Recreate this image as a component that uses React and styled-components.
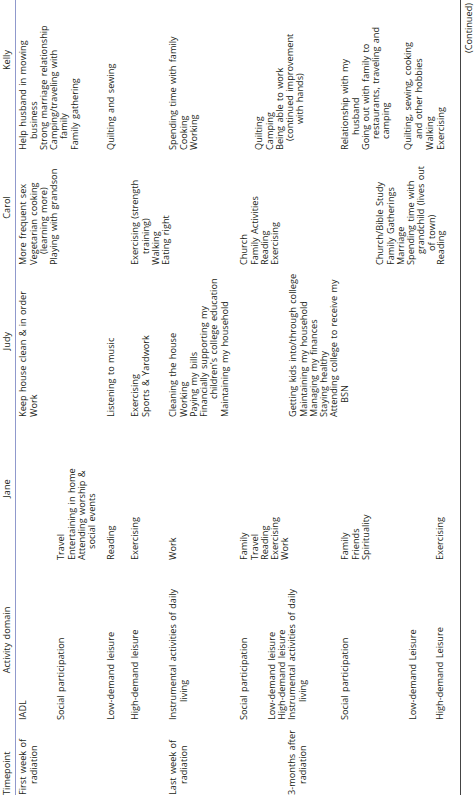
import React from 'react';
import styled, { createGlobalStyle } from 'styled-components';

// Table is set on a landscape sheet, then turned a quarter to the left
const GlobalStyle = createGlobalStyle`
  html, body {
    margin: 0;
    padding: 0;
    background: #fff;
  }
  body {
    font-family: 'Open Sans', 'Liberation Sans', sans-serif;
    color: #231f20;
  }
`;

const COLUMNS = '75px 160px 143px 152px 115px 180px';

const headers = [
  { label: 'Timepoint', align: 'left' },
  { label: 'Activity domain' },
  { label: 'Jane' },
  { label: 'Judy' },
  { label: 'Carol' },
  { label: 'Kelly' },
];

// one entry per table row; h = row height, shift = offset of a cell
// an entry is a string, or an array of wrapped lines ({ t, i } sets the indent)
const rows = [
  {
    h: 38,
    time: [['First week of', 'radiation']],
    domain: ['IADL'],
    cells: [
      null,
      { items: ['Keep house clean & in order', 'Work'] },
      { items: ['More frequent sex', ['Vegetarian cooking', '(learning more)'], 'Playing with grandson'] },
      {
        items: [
          ['Help husband in mowing', 'business'],
          'Strong marriage relationship',
          ['Camping/traveling with', 'family'],
          'Family gathering',
        ],
      },
    ],
  },
  {
    h: 50,
    domain: ['Social participation'],
    cells: [{ items: ['Travel', 'Entertaining in home', ['Attending worship &', 'social events']] }, null, null, null],
  },
  {
    h: 24,
    domain: ['Low-demand leisure'],
    cells: [{ items: ['Reading'] }, { items: ['Listening to music'] }, null, { items: ['Quilting and sewing'] }],
  },
  {
    h: 38,
    domain: ['High-demand leisure'],
    cells: [
      { items: ['Exercising'] },
      { items: ['Exercising', 'Sports & Yardwork'] },
      { items: [['Exercising (strength', 'training)'], 'Walking', 'Eating right'] },
      null,
    ],
  },
  {
    h: 71,
    time: [['Last week of', 'radiation']],
    domain: [['Instrumental activities of daily', { t: 'living', i: 18 }]],
    cells: [
      { items: ['Work'] },
      {
        items: [
          'Cleaning the house',
          'Working',
          'Paying my bills',
          ['Financially supporting my', { t: "children's college education", i: 18 }],
          'Maintaining my household',
        ],
      },
      null,
      { items: ['Spending time with family', 'Cooking', 'Working'] },
    ],
  },
  {
    h: 28,
    domain: ['Social participation'],
    cells: [
      { items: ['Family', 'Travel', 'Reading', 'Exercising', 'Work'] },
      null,
      { items: ['Church', 'Family Activities', 'Reading', 'Exercising'] },
      {
        shift: 15,
        items: [
          'Quilting',
          'Camping',
          ['Being able to work', { t: '(continued improvement', i: 9 }, { t: 'with hands)', i: 26 }],
        ],
      },
    ],
  },
  { h: 10, domain: ['Low-demand leisure'], cells: [null, null, null, null] },
  { h: 10, domain: ['High-demand leisure'], cells: [null, null, null, null] },
  {
    h: 53,
    time: [['3-months after', 'radiation']],
    domain: [['Instrumental activities of daily', { t: 'living', i: 18 }]],
    cells: [
      null,
      {
        shift: 1,
        items: [
          'Getting kids into/through college',
          'Maintaining my household',
          'Managing my finances',
          'Staying healthy',
          ['Attending college to receive my', { t: 'BSN', i: 14 }],
        ],
      },
      null,
      null,
    ],
  },
  {
    h: 68,
    domain: ['Social participation'],
    cells: [
      { items: ['Family', 'Friends', 'Spirituality'] },
      null,
      {
        shift: 35,
        items: ['Church/Bible Study', 'Family Gatherings', 'Marriage', ['Spending time with', 'grandchild (lives out', { t: 'of town)', i: 14 }]],
      },
      {
        items: [
          ['Relationship with my', { t: 'husband', i: 15 }],
          ['Going out with family to', 'restaurants, traveling and', 'camping'],
        ],
      },
    ],
  },
  {
    h: 27,
    domain: ['Low-demand Leisure'],
    cells: [null, null, { shift: 28, items: ['Reading'] }, { shift: -5, items: [['Quilting, sewing, cooking', 'and other hobbies']] }],
  },
  {
    h: 25,
    domain: ['High-demand Leisure'],
    cells: [{ items: ['Exercising'] }, null, null, { shift: -10, items: ['Walking', 'Exercising'] }],
  },
];

const Entry = ({ item }) => {
  const lines = Array.isArray(item) ? item : [item];
  return (
    <>
      {lines.map((line, i) => {
        const text = typeof line === 'string' ? line : line.t;
        const indent = typeof line === 'string' ? (i === 0 ? 0 : 11) : line.i;
        return (
          <Line key={i} $indent={indent}>
            {text}
          </Line>
        );
      })}
    </>
  );
};

const App = () => {
  return (
    <Page>
      <GlobalStyle />
      <Sheet>
        <Table>
          <HeadRow>
            {headers.map(h => (
              <HeadCell key={h.label} $align={h.align}>
                {h.label}
              </HeadCell>
            ))}
          </HeadRow>
          <Body>
            {rows.map((row, r) => (
              <Row key={r} $h={row.h}>
                <Cell>{row.time && row.time.map((t, i) => <Entry key={i} item={t} />)}</Cell>
                <Cell>
                  {row.domain.map((d, i) => (
                    <Entry key={i} item={d} />
                  ))}
                </Cell>
                {row.cells.map((c, i) => (
                  <Cell key={i} $shift={c && c.shift}>
                    {c && c.items.map((it, j) => <Entry key={j} item={it} />)}
                  </Cell>
                ))}
              </Row>
            ))}
          </Body>
        </Table>
        <Continued>(Continued)</Continued>
      </Sheet>
    </Page>
  );
};

const Page = styled.div`
  width: 474px;
  height: 805px;
  overflow: hidden;
  background: #fff;
`;

const Sheet = styled.div`
  width: 805px;
  height: 474px;
  transform-origin: top left;
  transform: translateY(805px) rotate(-90deg);
`;

const Table = styled.div`
  margin-left: 10px;
  width: 825px;
  font-size: 9.2px;
  word-spacing: 1px;
`;

const HeadRow = styled.div`
  display: grid;
  grid-template-columns: ${COLUMNS};
  height: 15px;
  align-items: center;
  border-bottom: 1.5px solid #9099cc;
`;

const HeadCell = styled.div`
  text-align: ${p => p.$align || 'center'};
  line-height: 10.5px;
  white-space: nowrap;
`;

const Body = styled.div`
  padding-top: 2.25px;
  border-bottom: 1px solid #444;
`;

const Row = styled.div`
  display: grid;
  grid-template-columns: ${COLUMNS};
  height: ${p => p.$h}px;
`;

const Cell = styled.div`
  display: flex;
  flex-direction: column;
  margin-top: ${p => p.$shift || 0}px;
`;

const Line = styled.div`
  line-height: 10.3px;
  white-space: nowrap;
  padding-left: ${p => p.$indent}px;
`;

const Continued = styled.div`
  margin-top: 1.5px;
  margin-right: 3px;
  text-align: right;
  font-size: 9.2px;
  line-height: 11px;
`;

export default App;
